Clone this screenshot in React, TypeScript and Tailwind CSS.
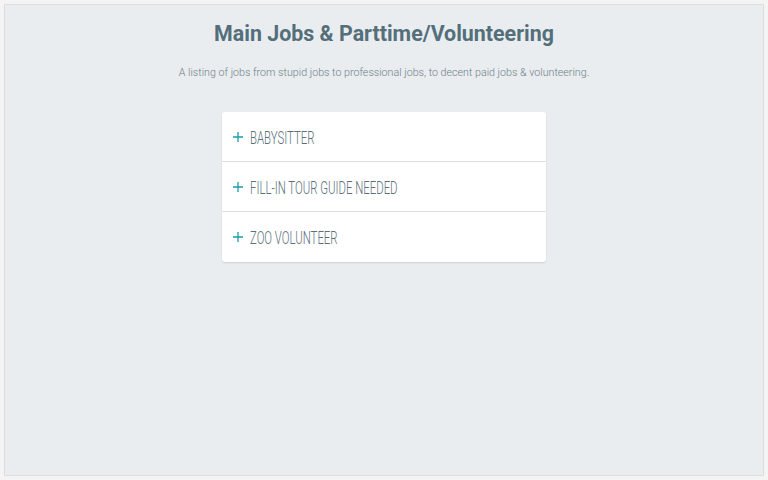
import React from "react";

const jobs = ["BABYSITTER", "FILL-IN TOUR GUIDE NEEDED", "ZOO VOLUNTEER"];

function JobRow({ title, last }: { title: string; last: boolean }) {
  return (
    <button
      type="button"
      className={`flex h-[50px] w-full items-center overflow-hidden px-[11px] text-left ${
        last ? "" : "border-b border-[#dcdfe2]"
      }`}
    >
      <svg
        viewBox="0 0 10 10"
        className="mr-[7px] h-[10px] w-[10px] shrink-0 text-[#1a9cab]"
        fill="none"
        stroke="currentColor"
        strokeWidth={1.3}
      >
        <path d="M5 0v10M0 5h10" />
      </svg>
      <span className="inline-block origin-left scale-x-[0.65] whitespace-nowrap pt-[3px] text-[17.5px] font-light text-[#5b6f7a] [font-family:Roboto,sans-serif]">
        {title}
      </span>
    </button>
  );
}

export default function App() {
  return (
    <div className="h-[480px] w-[768px] bg-[#f4f4f4] p-[4px]">
      <div className="flex h-full flex-col items-center border border-[#dedede] bg-[#e9edf0] [font-family:Roboto,sans-serif]">
        <h1 className="mt-[16px] text-[21.4px] font-bold leading-[26px] text-[#546e7a]">
          Main Jobs &amp; Parttime/Volunteering
        </h1>
        <p className="mt-[18px] text-[10.7px] font-light text-[#6f7e86]">
          A listing of jobs from stupid jobs to professional jobs, to decent paid jobs &amp; volunteering.
        </p>
        <div className="mt-[31px] w-[324px] rounded-[3px] bg-white shadow-[0_1px_2px_rgba(0,0,0,0.12)]">
          {jobs.map((job, i) => (
            <JobRow key={job} title={job} last={i === jobs.length - 1} />
          ))}
        </div>
      </div>
    </div>
  );
}
